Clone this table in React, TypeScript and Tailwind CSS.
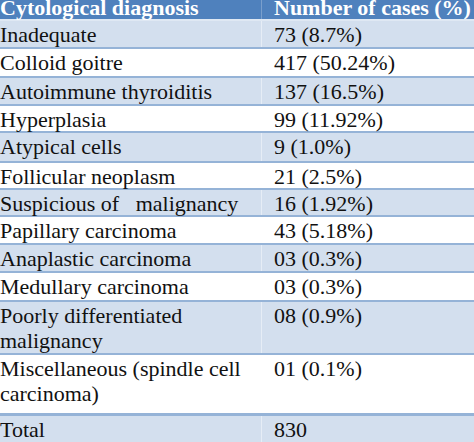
const rows: { name: string[]; value: string; h: string; shaded: boolean }[] = [
  { name: ["Inadequate"], value: "73 (8.7%)", h: "h-[28px]", shaded: true },
  { name: ["Colloid goitre"], value: "417 (50.24%)", h: "h-[29px]", shaded: false },
  { name: ["Autoimmune thyroiditis"], value: "137 (16.5%)", h: "h-[28px]", shaded: true },
  { name: ["Hyperplasia"], value: "99 (11.92%)", h: "h-[27px]", shaded: false },
  { name: ["Atypical cells"], value: "9 (1.0%)", h: "h-[30px]", shaded: true },
  { name: ["Follicular neoplasm"], value: "21 (2.5%)", h: "h-[27px]", shaded: false },
  { name: ["Suspicious of\u00a0\u00a0\u00a0malignancy"], value: "16 (1.92%)", h: "h-[27px]", shaded: true },
  { name: ["Papillary carcinoma"], value: "43 (5.18%)", h: "h-[28px]", shaded: false },
  { name: ["Anaplastic carcinoma"], value: "03 (0.3%)", h: "h-[28px]", shaded: true },
  { name: ["Medullary carcinoma"], value: "03 (0.3%)", h: "h-[29px]", shaded: false },
  { name: ["Poorly differentiated", "malignancy"], value: "08 (0.9%)", h: "h-[53px]", shaded: true },
  { name: ["Miscellaneous (spindle cell", "carcinoma)"], value: "01 (0.1%)", h: "h-[60px]", shaded: false },
];

export default function App() {
  return (
    <div className="w-[474px] h-[442px] overflow-hidden bg-white text-[22px] text-[#111] font-['Liberation_Serif','Times_New_Roman',serif]">
      {/* Header */}
      <div className="flex h-[21px] bg-[#4f81bd] border-b-2 border-[#dfe8f3] text-white font-bold leading-[20px]">
        <div className="w-[262px] border-r border-[#7a9fcc] -mt-[2px] whitespace-nowrap">
          Cytological diagnosis
        </div>
        <div className="flex-1 pl-[12px] -mt-[2px] whitespace-nowrap">Number of cases (%)</div>
      </div>

      {rows.map((r, i) => (
        <div
          key={i}
          className={`flex ${r.h} border-b-2 border-[#95b3d7] leading-[25px] ${r.shaded ? "bg-[#d3dfee]" : "bg-white"}`}
        >
          <div
            className={`w-[262px] pt-[1px] whitespace-nowrap ${r.shaded ? "border-r border-[#e6edf6]" : ""}`}
          >
            {r.name.map((n, j) => (
              <div key={j}>{n}</div>
            ))}
          </div>
          <div className="flex-1 pl-[12px] pt-[1px] whitespace-nowrap">{r.value}</div>
        </div>
      ))}

      {/* Total */}
      <div className="flex h-[27px] bg-[#d3dfee] leading-[25px] border-t border-[#95b3d7]">
        <div className="w-[262px] pt-[1px] border-r border-[#e6edf6]">Total</div>
        <div className="flex-1 pl-[12px] pt-[1px]">830</div>
      </div>
    </div>
  );
}
